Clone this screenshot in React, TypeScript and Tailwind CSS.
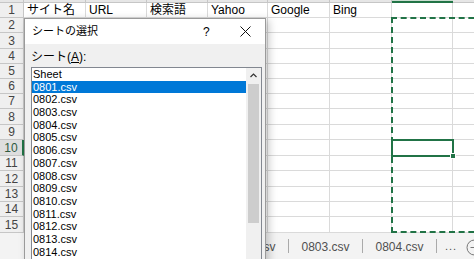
import React from "react";

const rowHeights = [15, 15, 16, 15, 15, 15, 15, 16, 15, 16, 15, 16, 15, 15, 16];
const colWidths = [62, 61, 61, 60, 62, 62, 61, 100];
const headerRow = ["サイト名", "URL", "検索語", "Yahoo", "Google", "Bing", "", ""];
const sheets = ["Sheet", "0801.csv", "0802.csv", "0803.csv", "0804.csv", "0805.csv", "0806.csv", "0807.csv", "0808.csv", "0809.csv", "0810.csv", "0811.csv", "0812.csv", "0813.csv", "0814.csv", "0815.csv"];

function ScrollUp() {
  return (
    <svg width="7" height="5" viewBox="0 0 7 5">
      <polyline points="0.5,4 3.5,1 6.5,4" fill="none" stroke="#333" strokeWidth="1.2" />
    </svg>
  );
}

function CloseIcon() {
  return (
    <svg width="11" height="11" viewBox="0 0 11 11">
      <path d="M0.5 0.5 L10.5 10.5 M10.5 0.5 L0.5 10.5" stroke="#111" strokeWidth="1" />
    </svg>
  );
}

function AddSheet() {
  return (
    <svg width="17" height="17" viewBox="0 0 17 17">
      <circle cx="8.5" cy="8.5" r="7.5" fill="none" stroke="#777" strokeWidth="1" />
      <path d="M8.5 4.5 V12.5 M4.5 8.5 H12.5" stroke="#777" strokeWidth="1" />
    </svg>
  );
}

export default function App() {
  return (
    <div className="relative w-[474px] h-[259px] overflow-hidden bg-white font-['Liberation_Sans','Noto_Sans_CJK_JP',sans-serif] text-black">
      <div className="flex flex-col h-full">
        {/* column header (mostly scrolled off) */}
        <div className="flex h-[3px] shrink-0">
          <div className="w-[24px] shrink-0 bg-[#e6e6e6] border-r border-b border-[#c6c6c6]" />
          {colWidths.map((w, i) => (
            <div
              key={i}
              style={{ width: w }}
              className={
                i === 6
                  ? "shrink-0 bg-[#c9ddd0] border-b-2 border-[#217346]"
                  : "shrink-0 bg-[#e6e6e6] border-r border-b border-[#c6c6c6]"
              }
            />
          ))}
        </div>

        {rowHeights.map((h, r) => (
          <div key={r} className="flex shrink-0" style={{ height: h }}>
            <div
              className={
                r === 9
                  ? "w-[24px] shrink-0 flex items-center justify-center text-[12px] bg-[#dedede] text-[#2f5a40] border-b border-[#c6c6c6] border-r-2 border-r-[#217346]"
                  : "w-[24px] shrink-0 flex items-center justify-center text-[12px] bg-[#efefef] text-[#444] border-b border-r border-[#c6c6c6]"
              }
            >
              {r + 1}
            </div>
            {colWidths.map((w, c) => (
              <div
                key={c}
                style={{ width: w }}
                className="shrink-0 border-r border-b border-[#dadada] pl-[3px] text-[12px] leading-[14px] whitespace-nowrap overflow-hidden"
              >
                {r === 0 ? headerRow[c] : ""}
              </div>
            ))}
          </div>
        ))}

        {/* sheet tabs */}
        <div className="flex-1 flex items-center bg-[#f3f3f3] text-[12px] text-[#505050]">
          <div className="w-[83px] shrink-0" />
          <div className="w-[57px] shrink-0 text-center bg-white">Sheet</div>
          {["0801.csv", "0802.csv", "0803.csv", "0804.csv"].map((t) => (
            <React.Fragment key={t}>
              <div className="w-[1px] h-[14px] bg-[#aaa] shrink-0" />
              <div className="w-[73px] shrink-0 text-center pt-[2px]">{t}</div>
            </React.Fragment>
          ))}
          <div className="w-[1px] h-[14px] bg-[#aaa] shrink-0" />
          <div className="pl-[8px] pt-[1px] text-[11px] tracking-[1px] shrink-0">...</div>
          <div className="pl-[9px] pt-[2px] flex shrink-0">
            <AddSheet />
          </div>
        </div>
      </div>

      {/* copy range marquee */}
      <div className="absolute left-[391px] top-[17px] right-[-10px] bottom-[26px] border-2 border-dashed border-[#217346]" />

      {/* active cell */}
      <div className="absolute left-[391px] top-[139px] w-[63px] h-[18px] border-2 border-[#217346]">
        <div className="absolute right-[-4px] bottom-[-4px] w-[6px] h-[6px] bg-[#217346] border border-white" />
      </div>

      {/* sheet select dialog */}
      <div className="absolute left-[24px] top-[18px] w-[242px] bottom-[-10px] border border-[#9a9a9a] bg-[#f0f0f0] shadow-[3px_2px_8px_rgba(0,0,0,0.22)] flex flex-col">
        <div className="h-[25px] bg-white flex items-center pl-[7px] text-[11px] shrink-0">
          <span className="flex-1">シートの選択</span>
          <span className="w-[10px] text-[12px] mr-[27px]">?</span>
          <span className="mr-[14px] flex">
            <CloseIcon />
          </span>
        </div>
        <div className="pl-[6px] pt-[7px] h-[23px] text-[12px] leading-[12px] shrink-0">
          シート(<span className="underline">A</span>):
        </div>
        <div className="ml-[6px] w-[231px] flex-1 border border-[#828790] bg-white flex overflow-hidden">
          <div className="flex-1 flex flex-col">
            {sheets.map((s, i) => (
              <div
                key={s}
                className={
                  i === 1
                    ? "h-[12.7px] leading-[12.7px] pl-[1px] text-[11px] bg-[#0078d7] text-white shrink-0"
                    : "h-[12.7px] leading-[12.7px] pl-[1px] text-[11px] shrink-0"
                }
              >
                {s}
              </div>
            ))}
          </div>
          <div className="w-[15px] shrink-0 bg-[#f0f0f0] flex flex-col items-center">
            <div className="h-[15px] flex items-center justify-center shrink-0">
              <ScrollUp />
            </div>
            <div className="mt-[1px] w-[11px] h-[139px] bg-[#cdcdcd]" />
          </div>
        </div>
      </div>
    </div>
  );
}
